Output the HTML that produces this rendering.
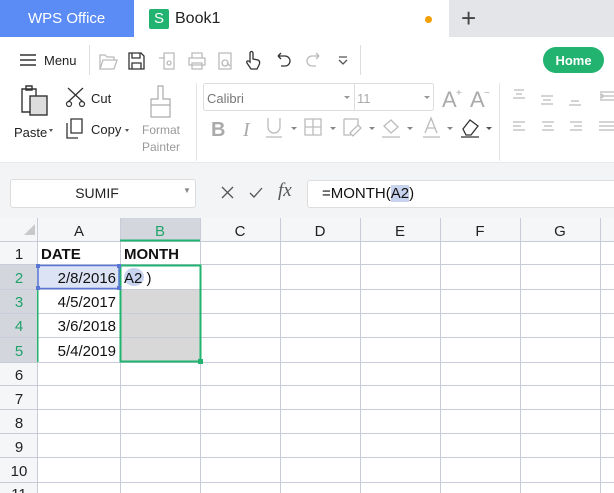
<!DOCTYPE html><html><head><style>
*{margin:0;padding:0;box-sizing:border-box}
body{width:614px;height:493px;overflow:hidden;background:#fff;font-family:"Liberation Sans",sans-serif;position:relative}
.a{position:absolute}
</style></head><body>
<div class="a" style="left:0;top:0;width:614px;height:37px;background:#e4e5e9"></div>
<div class="a" style="left:0;top:0;width:134px;height:37px;background:#5b8cf6;color:#fff;font-size:15px;line-height:37px;padding-left:28px">WPS Office</div>
<div class="a" style="left:134px;top:0;width:315px;height:37px;background:#fff"></div>
<div class="a" style="left:149px;top:9px;width:20px;height:20px;background:#21b36f;border-radius:2px;color:#fff;font-size:15px;text-align:center;line-height:20px">S</div>
<div class="a" style="left:175px;top:10px;font-size:16px;color:#222">Book1</div>
<div class="a" style="left:425px;top:16px;width:7px;height:7px;border-radius:50%;background:#f0a000"></div>
<div class="a" style="left:461px;top:3px;font-size:26px;color:#444">+</div>
<svg class="a" style="left:0;top:37px" width="614" height="126" font-family="Liberation Sans">
<g transform="translate(0,-37)">
<path d="M20 55H36M20 60H36M20 65H36" stroke="#333" stroke-width="1.4"/>
<text x="44" y="65" font-size="13" fill="#222">Menu</text>
<path d="M89.5 45V75M360.5 45V75" stroke="#ddd"/>
<g fill="none" stroke-width="1.3">
<path stroke="#bbb" d="M100 69V55h5l2 2h7v3M100 69l3-9h14l-3 9z"/>
<path stroke="#333" d="M129 53h12l3 3v13H129zM132 53v5h8v-5M132 69v-6h9v6"/>
<path stroke="#bbb" d="M164 53h10v16H164zM159 58h6M169 61a2 2 0 1 0 .1 0"/>
<path stroke="#bbb" d="M192 58v-5h10v5M189 58h16v7H189zM192 63h10v6H192z"/>
<path stroke="#bbb" d="M219 53h12v16h-12zM225 60a3 3 0 1 0 .1 0M227 63l3 3"/>
<path stroke="#333" d="M250 61V53a1.5 1.5 0 0 1 3 0v6l5 1c2 1 2 3 1 5l-2 4h-6l-4-6c-1-2 1-3 3-1z"/>
<path stroke="#333" d="M278 56h7a5 5 0 0 1 0 10h-4M278 56l3-3M278 56l3 3"/>
<path stroke="#bbb" d="M319 56h-7a5 5 0 0 0 0 10h4M319 56l-3-3M319 56l-3 3"/>
<path stroke="#555" d="M339 57h8M339 60l4 4 4-4"/>
</g>
<rect x="543" y="47" width="61" height="26" rx="13" fill="#21b36f"/>
<text x="573.5" y="65" font-size="13" font-weight="bold" fill="#fff" text-anchor="middle">Home</text>
<!-- clipboard -->
<path d="M22 89h14v23H22zM26 86h6v4h-6z" stroke="#333" fill="none" stroke-width="1.4"/>
<rect x="30" y="96" width="17" height="19" fill="#ddd" stroke="#333" stroke-width="1.4"/>
<text x="14" y="137" font-size="13" fill="#222">Paste</text><path d="M49 129l2 3 2-3z" fill="#555"/>
<path d="M68 88l15 14M83 88l-15 14" stroke="#333" stroke-width="1.3"/>
<circle cx="69" cy="104" r="2.5" fill="none" stroke="#333" stroke-width="1.2"/><circle cx="82" cy="104" r="2.5" fill="none" stroke="#333" stroke-width="1.2"/>
<text x="91" y="103" font-size="13" fill="#222">Cut</text>
<path d="M71 119h11v14H71zM67 123v15h11" stroke="#333" fill="none" stroke-width="1.3"/>
<text x="91" y="134" font-size="13" fill="#222">Copy</text><path d="M125 129l2 3 2-3z" fill="#555"/>
<path d="M158 86h5v13h7v6h-19v-6h7zM151 105h19v12h-19z" stroke="#aaa" fill="none" stroke-width="1.2"/>
<text x="161" y="134" font-size="12" fill="#999" text-anchor="middle">Format</text>
<text x="161" y="151" font-size="12" fill="#999" text-anchor="middle">Painter</text>
<path d="M196.5 83V161M499.5 83V161" stroke="#e5e5e5"/>
<rect x="203.5" y="83.5" width="230" height="27" rx="2" fill="#fff" stroke="#ddd"/>
<path d="M354.5 84V110" stroke="#ddd"/>
<text x="207" y="103" font-size="13" fill="#777">Calibri</text><path d="M344 96l3 3 3-3z" fill="#999"/>
<text x="357" y="103" font-size="13" fill="#aaa">11</text><path d="M424 96l3 3 3-3z" fill="#999"/>
<text x="442" y="107" font-size="22" fill="#aaa">A</text><text x="456" y="96" font-size="10" fill="#aaa">+</text>
<text x="470" y="107" font-size="22" fill="#aaa">A</text><text x="484" y="96" font-size="10" fill="#aaa">−</text>
<text x="211" y="136" font-size="20" font-weight="bold" fill="#aaa">B</text>
<text x="243" y="136" font-size="20" font-style="italic" fill="#aaa" font-family="Liberation Serif">I</text>
<g fill="none" stroke-width="1.3">
<path stroke="#bbb" d="M268 118v9a6 6 0 0 0 12 0v-9M266 137h16"/>
<path stroke="#bbb" d="M305 119h16v16H305zM313 119v16M305 127h16"/>
<path stroke="#bbb" d="M344 119h14v7M344 119v16h7M350 133l8-8 3 3-8 8z"/>
<path stroke="#bbb" d="M384 126l7-6 7 7-7 6zM382 137h18"/>
<path stroke="#bbb" d="M425 133l6-15 6 15M427 128h8M423 137h17"/>
<path stroke="#333" d="M463 129l7-9 8 6-7 9h-5zM461 137h18"/>
</g>
<g fill="#888"><path d="M291 127l3 3 3-3zM330 127l3 3 3-3zM369 127l3 3 3-3zM407 127l3 3 3-3zM447 127l3 3 3-3z"/><path d="M486 127l3 3 3-3z" fill="#555"/></g>
<g stroke="#bbb" stroke-width="1.3" fill="none">
<path d="M514 90h10M516 94h6M513 98h12"/>
<path d="M541 96h12M543 100h8M541 104h12"/>
<path d="M571 101h8M569 105h12"/>
<path d="M600 92h14M604 96h10M600 100h14M604 96l-3-2v4z"/>
<path d="M513 122h12M513 126h8M513 130h12M542 122h12M544 126h8M542 130h12M570 122h12M574 126h8M570 130h12M599 122h15M599 126h15M599 130h15"/>
</g>
</g>
</svg>
<div class="a" style="left:0;top:162px;width:614px;height:56px;background:#f3f4f6;border-top:1px solid #e8e8e8"></div>
<div class="a" style="left:10px;top:179px;width:186px;height:29px;background:#fff;border:1px solid #dcdcdc;border-radius:3px;font-size:14px;color:#222;text-align:center;line-height:27px;padding-right:12px">SUMIF</div>
<div class="a" style="left:183px;top:186px;font-size:8px;color:#888">▼</div>
<svg class="a" style="left:220px;top:184px" width="50" height="18"><path d="M2 3l11 11M13 3L2 14M30 9l4 4 8-9" stroke="#555" fill="none" stroke-width="1.3"/></svg>
<div class="a" style="left:278px;top:180px;font-size:19px;color:#555;font-style:italic;font-family:'Liberation Serif'">fx</div>
<div class="a" style="left:307px;top:180px;width:310px;height:28px;background:#fff;border:1px solid #ddd;border-radius:3px"></div>
<div class="a" style="left:322px;top:185px;font-size:15px;color:#111">=MONTH(<span style="background:#c7d3ef">A2</span>)</div>
<svg class="a" style="left:0;top:218px" width="614" height="275">
<rect x="0" y="0" width="614" height="23" fill="#f5f6f8"/>
<rect x="0" y="23" width="37" height="252" fill="#f5f6f8"/>
<rect x="120" y="0" width="80" height="23" fill="#d3d6dd"/>
<rect x="0" y="47" width="37" height="97" fill="#d3d6dd"/>
<rect x="121" y="71" width="79" height="73" fill="#d8d8d8"/>
<rect x="38" y="48" width="81" height="22" fill="#dce3f5"/>
<path d="M24 17h11V6z" fill="#c8c8c8"/>
<g stroke="#c8ccd8" stroke-width="1">
<path d="M37.5 0V275M120.5 0V275M200.5 0V275M280.5 0V275M360.5 0V275M440.5 0V275M520.5 0V275M600.5 0V275"/>
<path d="M0 23.5H614M0 46.5H614M0 71.5H614M0 95.5H614M0 119.5H614M0 144.5H614M0 167.5H614M0 191.5H614M0 215.5H614M0 239.5H614M0 264.5H614"/>
</g>
<rect x="120" y="21.5" width="80" height="2" fill="#21b36f"/>
<rect x="37" y="71" width="1.5" height="73" fill="#21b36f"/>
<rect x="120.5" y="47.5" width="80" height="96" fill="none" stroke="#21b36f" stroke-width="2"/>
<rect x="198" y="141" width="5" height="5" fill="#21b36f"/>
<rect x="38" y="47.5" width="81" height="23" fill="none" stroke="#5a77d6" stroke-width="1.5"/>
<rect x="36" y="46" width="4" height="4" fill="#5a77d6"/><rect x="117" y="46" width="4" height="4" fill="#5a77d6"/><rect x="36" y="68" width="4" height="4" fill="#5a77d6"/><rect x="117" y="68" width="4" height="4" fill="#5a77d6"/>
<ellipse cx="134" cy="59" rx="10" ry="9" fill="#c7d3ef"/>
<g font-family="Liberation Sans" font-size="15" fill="#222" text-anchor="middle">
<text x="79" y="18">A</text><text x="160" y="18" fill="#21a36a">B</text><text x="240" y="18">C</text><text x="320" y="18">D</text><text x="400" y="18">E</text><text x="480" y="18">F</text><text x="560" y="18">G</text>
<text x="19" y="41">1</text><text x="19" y="65" fill="#21a36a">2</text><text x="19" y="89" fill="#21a36a">3</text><text x="19" y="113" fill="#21a36a">4</text><text x="19" y="138" fill="#21a36a">5</text>
<text x="19" y="162">6</text><text x="19" y="186">7</text><text x="19" y="210">8</text><text x="19" y="234">9</text><text x="19" y="258">10</text><text x="19" y="281">11</text>
</g>
<g font-family="Liberation Sans" font-size="15" fill="#111">
<text x="41" y="41" font-weight="bold">DATE</text><text x="124" y="41" font-weight="bold">MONTH</text>
<text x="116" y="65" text-anchor="end">2/8/2016</text><text x="116" y="89" text-anchor="end">4/5/2017</text><text x="116" y="113" text-anchor="end">3/6/2018</text><text x="116" y="138" text-anchor="end">5/4/2019</text>
<text x="124" y="65">A2 )</text>
</g>
</svg>
</body></html>
